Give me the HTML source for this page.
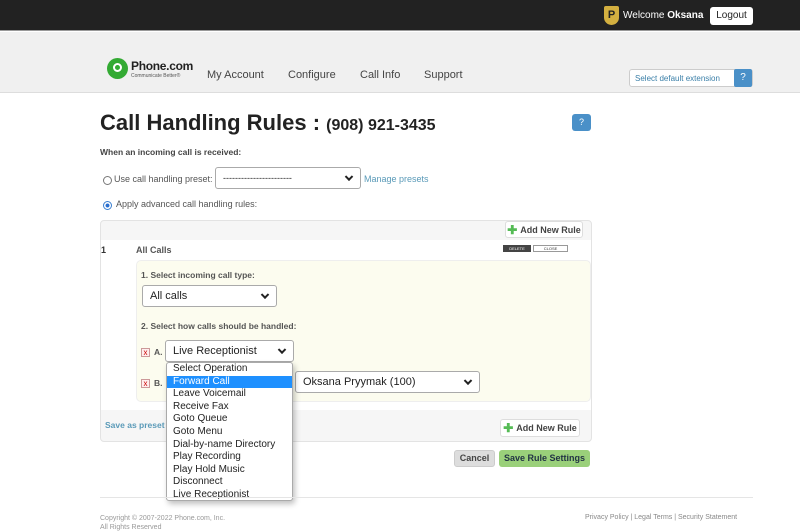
<!DOCTYPE html>
<html><head><style>
*{margin:0;padding:0;box-sizing:border-box}
body{width:800px;height:532px;position:relative;background:#fff;font-family:"Liberation Sans",sans-serif;overflow:hidden;color:#333}
.a{position:absolute;white-space:nowrap}
.sel{position:absolute;background:#fff;border:1px solid #aaa;border-radius:3px;font-size:11px;color:#222;padding:0 7px;display:flex;align-items:center;white-space:nowrap}
.sel:after{content:"";position:absolute;right:8px;top:50%;width:4px;height:4px;border-right:2px solid #222;border-bottom:2px solid #222;transform:translateY(-70%) rotate(45deg)}
.btn{position:absolute;background:#fff;border:1px solid #ddd;border-radius:3px;font-size:9px;font-weight:bold;color:#444;display:flex;align-items:center;justify-content:center;gap:3px;white-space:nowrap}
.plus{color:#5b5;font-size:12px;font-weight:bold}
.x{position:absolute;width:9px;height:9px;border:1px solid #c99;background:#fee;color:#c00;font-size:8px;line-height:7px;text-align:center}
</style></head><body>
<div class="a" style="left:0;top:0;width:800px;height:31px;background:#222;border-bottom:1px solid #999"></div>
<div class="a" style="left:604px;top:6px;width:15px;height:19px;background:#d4b040;border-radius:2px 2px 8px 8px;color:#222;font-size:11px;font-weight:bold;text-align:center;line-height:18px">P</div>
<div class="a" style="left:623px;top:10px;font-size:10px;color:#fff">Welcome <b>Oksana</b></div>
<div class="a" style="left:710px;top:7px;width:43px;height:18px;background:#fff;border-radius:3px;font-size:10px;color:#222;text-align:center;line-height:18px">Logout</div>
<div class="a" style="left:0;top:32px;width:800px;height:61px;background:#f0f0f0;border-bottom:1px solid #ddd"></div>
<div class="a" style="left:107px;top:58px;width:21px;height:21px;border-radius:50%;background:#3a3;"><div style="position:absolute;left:6px;top:5px;width:9px;height:9px;border-radius:50%;border:2px solid #fff"></div></div>
<div class="a" style="left:131px;top:59px;font-size:12px;font-weight:bold;color:#222;letter-spacing:-.3px">Phone.com</div>
<div class="a" style="left:131px;top:73px;font-size:5px;color:#555">Communicate Better®</div>
<div class="a" style="left:207px;top:69px;font-size:11px;color:#444">My Account</div>
<div class="a" style="left:288px;top:69px;font-size:11px;color:#444">Configure</div>
<div class="a" style="left:360px;top:69px;font-size:11px;color:#444">Call Info</div>
<div class="a" style="left:424px;top:69px;font-size:11px;color:#444">Support</div>
<div class="a" style="left:629px;top:69px;width:124px;height:18px;background:#fff;border:1px solid #ccc;border-radius:3px;font-size:8px;color:#3a7fa8;padding:4px 0 0 5px">Select default extension</div>
<div class="a" style="left:734px;top:69px;width:18px;height:18px;background:#4a90c8;border-radius:2px;color:#fff;font-size:10px;text-align:center;line-height:18px">?</div>

<div class="a" style="left:100px;top:110px;font-size:22px;font-weight:bold;color:#222">Call Handling Rules : <span style="font-size:16px">(908) 921-3435</span></div>
<div class="a" style="left:572px;top:114px;width:19px;height:17px;background:#4a90c8;border-radius:3px;color:#fff;font-size:9px;text-align:center;line-height:17px">?</div>
<div class="a" style="left:100px;top:147px;font-size:8.5px;font-weight:bold;color:#444">When an incoming call is received:</div>
<div class="a" style="left:103px;top:176px;width:9px;height:9px;border:1px solid #777;border-radius:50%"></div>
<div class="a" style="left:114px;top:174px;font-size:9px;color:#555">Use call handling preset:</div>
<div class="sel" style="left:215px;top:167px;width:146px;height:22px;font-size:9px">-----------------------</div>
<div class="a" style="left:364px;top:174px;font-size:9px;color:#5a9ab8">Manage presets</div>
<div class="a" style="left:103px;top:201px;width:9px;height:9px;border:1px solid #3a7fd0;border-radius:50%;background:radial-gradient(#2a6fd0 35%,#fff 45%)"></div>
<div class="a" style="left:116px;top:199px;font-size:9px;color:#555">Apply advanced call handling rules:</div>

<div class="a" style="left:100px;top:220px;width:492px;height:222px;border:1px solid #e3e3e3;border-radius:4px;background:#f6f6f6"></div>
<div class="a" style="left:101px;top:240px;width:490px;height:170px;background:#fff"></div>
<div class="btn" style="left:505px;top:221px;width:78px;height:17px"><span class="plus">✚</span>Add New Rule</div>
<div class="a" style="left:101px;top:245px;font-size:9px;font-weight:bold">1</div>
<div class="a" style="left:136px;top:245px;font-size:9px;font-weight:bold;color:#555">All Calls</div>
<div class="a" style="left:503px;top:245px;width:28px;height:7px;background:#444;font-size:4px;color:#fff;line-height:7px;text-align:center">DELETE</div>
<div class="a" style="left:533px;top:245px;width:35px;height:7px;border:1px solid #999;font-size:4px;line-height:5px;text-align:center">CLOSE</div>
<div class="a" style="left:136px;top:260px;width:455px;height:142px;background:#fcfcef;border:1px solid #eee;border-radius:5px"></div>
<div class="a" style="left:141px;top:270px;font-size:8.5px;font-weight:bold;color:#555">1. Select incoming call type:</div>
<div class="sel" style="left:142px;top:285px;width:135px;height:22px">All calls</div>
<div class="a" style="left:141px;top:321px;font-size:8.5px;font-weight:bold;color:#555">2. Select how calls should be handled:</div>
<div class="x" style="left:141px;top:348px">x</div>
<div class="a" style="left:154px;top:347px;font-size:8.5px;font-weight:bold;color:#555">A.</div>
<div class="sel" style="left:165px;top:340px;width:129px;height:22px">Live Receptionist</div>
<div class="x" style="left:141px;top:379px">x</div>
<div class="a" style="left:154px;top:378px;font-size:8.5px;font-weight:bold;color:#555">B.</div>
<div class="sel" style="left:295px;top:371px;width:185px;height:22px">Oksana Pryymak (100)</div>
<div class="a" style="left:105px;top:420px;font-size:8.5px;font-weight:bold;color:#5a9ab8">Save as preset</div>
<div class="btn" style="left:500px;top:419px;width:80px;height:18px"><span class="plus">✚</span>Add New Rule</div>
<div class="a" style="left:454px;top:450px;width:41px;height:17px;background:#ddd;border:1px solid #ccc;border-radius:3px;font-size:9px;font-weight:bold;color:#444;text-align:center;line-height:15px">Cancel</div>
<div class="a" style="left:499px;top:450px;width:91px;height:17px;background:#9ad07a;border-radius:3px;font-size:9px;font-weight:bold;color:#234;text-align:center;line-height:17px">Save Rule Settings</div>

<div class="a" style="left:166px;top:362px;width:127px;height:139px;background:#fff;border:1px solid #aaa;border-radius:3px;box-shadow:2px 3px 6px rgba(0,0,0,.25);font-size:10px;color:#222;line-height:12.6px">
<div style="padding-left:6px">Select Operation</div>
<div style="padding-left:6px;background:#1e90ff;color:#fff">Forward Call</div>
<div style="padding-left:6px">Leave Voicemail</div>
<div style="padding-left:6px">Receive Fax</div>
<div style="padding-left:6px">Goto Queue</div>
<div style="padding-left:6px">Goto Menu</div>
<div style="padding-left:6px">Dial-by-name Directory</div>
<div style="padding-left:6px">Play Recording</div>
<div style="padding-left:6px">Play Hold Music</div>
<div style="padding-left:6px">Disconnect</div>
<div style="padding-left:6px">Live Receptionist</div>
</div>

<div class="a" style="left:100px;top:497px;width:653px;height:1px;background:#e5e5e5"></div>
<div class="a" style="left:100px;top:514px;font-size:7px;color:#999;line-height:9px">Copyright © 2007-2022 Phone.com, Inc.<br>All Rights Reserved</div>
<div class="a" style="left:585px;top:514px;font-size:7px;color:#888">Privacy Policy | Legal Terms | Security Statement</div>
</body></html>
